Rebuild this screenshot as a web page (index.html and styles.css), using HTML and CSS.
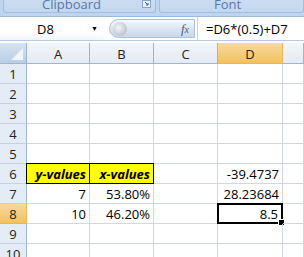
FILE: index.html
```html
<!DOCTYPE html>
<html lang="en">
<head>
  <meta charset="UTF-8">
  <title>Sheet1</title>
  <link rel="stylesheet" href="styles.css">
</head>
<body>
  <div class="ribbon">
    <div class="group group-clip">
      <span class="group-label">Clipboard</span>
      <span class="launcher">
        <svg width="9" height="8" viewBox="0 0 9 8"><rect x="0.5" y="0.5" width="8" height="7" fill="#e8f0fa" stroke="#8aa6c8"/><path d="M3 2 L6 5 M6 3 V5 H4" stroke="#3d5f8f" fill="none"/></svg>
      </span>
    </div>
    <div class="group group-font">
      <span class="group-label">Font</span>
    </div>
  </div>

  <div class="formula-bar">
    <div class="name-box">
      <span class="name">D8</span>
      <span class="arrow">&#9660;</span>
    </div>
    <div class="fx-pill">
      <span class="knob"></span>
      <span class="fx"><i>f</i><small>x</small></span>
    </div>
    <div class="formula">=D6*(0.5)+D7</div>
  </div>

  <div class="sheet">
    <div class="corner"></div>
    <div class="colhead">A</div>
    <div class="colhead">B</div>
    <div class="colhead">C</div>
    <div class="colhead active">D</div>
    <div class="colhead"></div>

    <div class="rowhead">1</div><div class="cell"></div><div class="cell"></div><div class="cell"></div><div class="cell"></div><div class="cell"></div>
    <div class="rowhead">2</div><div class="cell"></div><div class="cell"></div><div class="cell"></div><div class="cell"></div><div class="cell"></div>
    <div class="rowhead">3</div><div class="cell"></div><div class="cell"></div><div class="cell"></div><div class="cell"></div><div class="cell"></div>
    <div class="rowhead">4</div><div class="cell"></div><div class="cell"></div><div class="cell"></div><div class="cell"></div><div class="cell"></div>
    <div class="rowhead">5</div><div class="cell"></div><div class="cell"></div><div class="cell"></div><div class="cell"></div><div class="cell"></div>
    <div class="rowhead">6</div><div class="cell label">y-values</div><div class="cell label">x-values</div><div class="cell"></div><div class="cell num">-39.4737</div><div class="cell"></div>
    <div class="rowhead">7</div><div class="cell num">7</div><div class="cell num">53.80%</div><div class="cell"></div><div class="cell num">28.23684</div><div class="cell"></div>
    <div class="rowhead active">8</div><div class="cell num">10</div><div class="cell num">46.20%</div><div class="cell"></div><div class="cell num selected">8.5<span class="handle"></span></div><div class="cell"></div>
    <div class="rowhead">9</div><div class="cell"></div><div class="cell"></div><div class="cell"></div><div class="cell"></div><div class="cell"></div>
    <div class="rowhead">10</div><div class="cell"></div><div class="cell"></div><div class="cell"></div><div class="cell"></div><div class="cell"></div>
  </div>
</body>
</html>
```

FILE: styles.css
```css
body {
  margin: 0;
  width: 304px;
  height: 257px;
  overflow: hidden;
  background: #fff;
  font-family: 'Open Sans', 'Liberation Sans', sans-serif;
}

/* ribbon */
.ribbon {
  height: 16px;
  background: #bfd4ee;
  display: flex;
  gap: 3px;
  padding-left: 3px;
  box-sizing: border-box;
}
.group {
  height: 12px;
  background: linear-gradient(#cbdcf1, #c3d7f0);
  border: 1px solid #a6bedd;
  border-top: none;
  border-radius: 0 0 3px 3px;
  position: relative;
  overflow: hidden;
  display: flex;
  justify-content: center;
  align-items: flex-end;
}
.group-clip { width: 151px; }
.group-font { flex: 1; }
.group-label {
  color: #5779a9;
  font-size: 13px;
  line-height: 13px;
  margin-bottom: 1px;
  margin-right: 16px;
}
.group-font .group-label { margin-right: 8px; }
.launcher {
  position: absolute;
  right: 4px;
  top: 0;
  line-height: 0;
}

/* formula bar */
.formula-bar {
  height: 23px;
  display: flex;
  align-items: stretch;
  background: #fff;
  border-top: 1px solid #9fb9d9;
  border-bottom: 1px solid #b7c9df;
  margin-bottom: 2px;
  box-sizing: border-box;
  height: 25px;
}
.name-box {
  width: 104px;
  display: flex;
  align-items: center;
  font-size: 13px;
  color: #000;
  background: linear-gradient(#fff 70%, #f2f5fa);
}
.name {
  margin-left: 37px;
  flex: 1;
}
.arrow {
  font-size: 7px;
  margin-right: 6px;
}
.fx-pill {
  width: 84px;
  margin: 2px 2px 2px 5px;
  background: linear-gradient(#f6f9fd, #d9e4f2 55%, #c9d8ea);
  border: 1px solid #a9bfda;
  border-radius: 10px 0 0 10px;
  display: flex;
  align-items: center;
  justify-content: space-between;
}
.knob {
  width: 14px;
  height: 14px;
  border-radius: 50%;
  margin-left: 3px;
  background: radial-gradient(circle at 40% 40%, #f4f6f8, #bfc6cf 70%, #a9b2bd);
}
.fx {
  font-family: 'Liberation Serif', serif;
  font-size: 13px;
  color: #505d6e;
  margin-right: 5px;
  font-style: italic;
}
.fx small { font-size: 10px; }
.formula {
  flex: 1;
  font-size: 13px;
  display: flex;
  align-items: center;
  padding-left: 8px;
  border-left: 1px solid #c4d3e6;
}

/* sheet */
.sheet {
  display: grid;
  grid-template-columns: 27px 63px 64px 64px 65px 1fr;
  grid-template-rows: 21px repeat(10, 20px);
  font-size: 13px;
}
.corner {
  background: linear-gradient(#d7e3f1, #b9cde6);
  border-right: 1px solid #9eb6ce;
  border-bottom: 1px solid #9eb6ce;
  position: relative;
}
.corner::after {
  content: '';
  position: absolute;
  right: 3px;
  bottom: 3px;
  border-left: 12px solid transparent;
  border-bottom: 12px solid #f2f6fb;
}
.colhead,
.rowhead {
  background: linear-gradient(#f3f6fb, #e4ebf5);
  border-right: 1px solid #9eb6ce;
  border-bottom: 1px solid #9eb6ce;
  color: #222;
  display: flex;
  align-items: center;
  justify-content: center;
}
.colhead { padding-top: 2px; }
.rowhead { background: #e4ecf7; border-bottom-color: #c5d2e2; }
.colhead.active,
.rowhead.active {
  background: linear-gradient(#f9d99f, #f1c15f);
  border-color: #f2b54c;
}
.cell {
  border-right: 1px solid #d0d7e5;
  border-bottom: 1px solid #d0d7e5;
  display: flex;
  align-items: center;
  padding: 0 3px;
  position: relative;
}
.num { justify-content: flex-end; }
.label {
  background: #ffff00;
  border: 1px solid #000;
  margin: -1px 0 0 -1px;
  justify-content: flex-end;
  font-weight: bold;
  font-style: italic;
}
.selected {
  border: 2px solid #000;
  margin: -1px 0 0 -1px;
}
.handle {
  position: absolute;
  right: -4px;
  bottom: -4px;
  width: 5px;
  height: 5px;
  background: #000;
  border: 1px solid #fff;
}
```
